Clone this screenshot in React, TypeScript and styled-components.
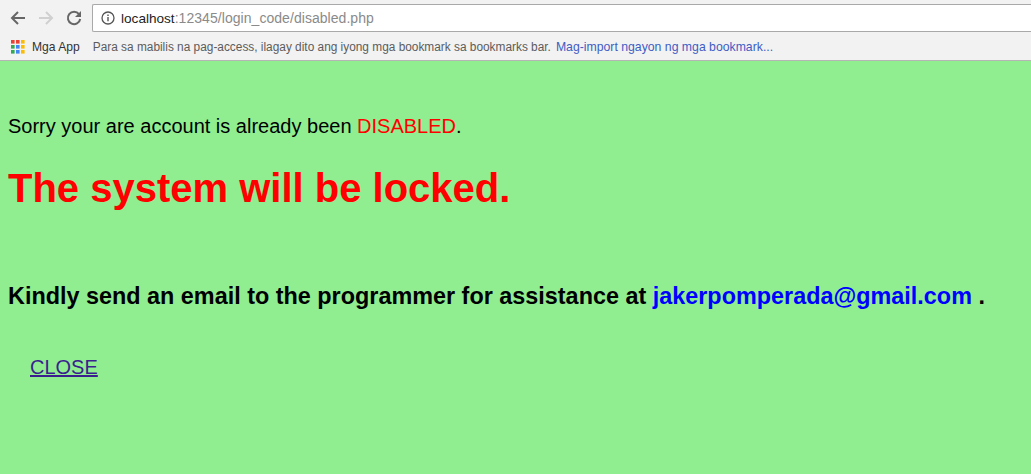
import React from 'react';
import styled, { createGlobalStyle } from 'styled-components';

const GlobalStyle = createGlobalStyle`
  html, body {
    margin: 0;
    padding: 0;
    height: 100%;
    overflow: hidden;
    background: #90ee90;
  }
`;

const BrowserBar = styled.header`
  background: #f2f2f2;
  height: 60px;
  border-bottom: 1px solid #b5b5b5;
  font-family: 'Liberation Sans', Arial, sans-serif;
`;

const NavRow = styled.div`
  display: flex;
  align-items: center;
  height: 33px;
  padding: 3px 0 0 8px;
  box-sizing: border-box;
`;

const NavButton = styled.span`
  display: flex;
  width: 28px;
  height: 20px;
  align-items: center;
  color: ${({ $dim }: { $dim?: boolean }) => ($dim ? '#d0d0d0' : '#666')};
`;

const AddressBox = styled.div`
  flex: 1;
  display: flex;
  align-items: center;
  gap: 6px;
  height: 28px;
  padding-left: 8px;
  background: #fff;
  border: 1px solid #a9a9a9;
  border-right: none;
  border-radius: 2px 0 0 2px;
  box-sizing: border-box;
  font-size: 14px;
  letter-spacing: 0.05px;
  color: #8a8a8a;
`;

const Host = styled.span`
  font-size: 13.6px;
  letter-spacing: 0;
  color: #222;
`;

const BookmarkRow = styled.div`
  display: flex;
  align-items: center;
  height: 27px;
  padding-left: 11px;
  font-size: 11.86px;
  color: #5c5c5c;
`;

const AppsLabel = styled.span`
  margin: 0 13px 0 7px;
  font-size: 12.1px;
  color: #333;
`;

const ImportLink = styled.span`
  margin-left: 5px;
  font-size: 12.25px;
  color: #3f5cc4;
`;

const Page = styled.main`
  padding: 54px 8px 0;
  font-family: 'Liberation Sans', Arial, sans-serif;
  color: #000;
`;

const Notice = styled.p`
  margin: 0;
  font-size: 20px;
  line-height: 23px;
`;

const Red = styled.span`
  color: #f00;
`;

const Headline = styled.h1`
  margin: 27px 0 0;
  font-size: 40px;
  line-height: 46px;
  font-weight: bold;
  color: #f00;
`;

const Assist = styled.h2`
  margin: 71px 0 0;
  font-size: 23.4px;
  line-height: 28px;
  font-weight: bold;
`;

const Mail = styled.span`
  color: #00f;
`;

const CloseLink = styled.a`
  display: inline-block;
  margin: 46px 0 0 22px;
  font-size: 20px;
  line-height: 23px;
  color: #3b1f8f;
  text-decoration: underline;
`;

const AppsIcon = () => (
  <svg width="14" height="14" viewBox="0 0 14 14">
    {[0, 1, 2].flatMap((r) =>
      [0, 1, 2].map((c) => (
        <rect
          key={`${r}-${c}`}
          x={c * 5}
          y={r * 5}
          width="3.6"
          height="3.6"
          fill={[['#e94235', '#e94235', '#fbbc04'], ['#34a853', '#4285f4', '#fbbc04'], ['#34a853', '#4285f4', '#fbbc04']][r][c]}
        />
      ))
    )}
  </svg>
);

const App = () => (
  <>
    <GlobalStyle />
    <BrowserBar>
      <NavRow>
        <NavButton>
          <svg width="18" height="18" viewBox="0 0 18 18">
            <path d="M17 9H5M10 3 4 9l6 6" fill="none" stroke="currentColor" strokeWidth="2" />
          </svg>
        </NavButton>
        <NavButton $dim>
          <svg width="18" height="18" viewBox="0 0 18 18">
            <path d="M3 9h12M10 3l6 6-6 6" fill="none" stroke="currentColor" strokeWidth="2" />
          </svg>
        </NavButton>
        <NavButton>
          <svg width="18" height="18" viewBox="0 0 18 18">
            <path d="M15 5.2A6.2 6.2 0 1 0 16.2 10" fill="none" stroke="currentColor" strokeWidth="2" />
            <path d="M17 2v6h-6z" fill="currentColor" />
          </svg>
        </NavButton>
        <AddressBox>
          <svg width="14" height="14" viewBox="0 0 14 14">
            <circle cx="7" cy="7" r="6" fill="none" stroke="#555" strokeWidth="1.3" />
            <path d="M7 6v4.2M7 3.6v1.3" stroke="#555" strokeWidth="1.4" />
          </svg>
          <span>
            <Host>localhost</Host>:12345/login_code/disabled.php
          </span>
        </AddressBox>
      </NavRow>
      <BookmarkRow>
        <AppsIcon />
        <AppsLabel>Mga App</AppsLabel>
        <span>Para sa mabilis na pag-access, ilagay dito ang iyong mga bookmark sa bookmarks bar.</span>
        <ImportLink>Mag-import ngayon ng mga bookmark...</ImportLink>
      </BookmarkRow>
    </BrowserBar>
    <Page>
      <Notice>
        Sorry your are account is already been <Red>DISABLED</Red>.
      </Notice>
      <Headline>The system will be locked.</Headline>
      <Assist>
        Kindly send an email to the programmer for assistance at <Mail>jakerpomperada@gmail.com</Mail> .
      </Assist>
      <CloseLink href="#">CLOSE</CloseLink>
    </Page>
  </>
);

export default App;
